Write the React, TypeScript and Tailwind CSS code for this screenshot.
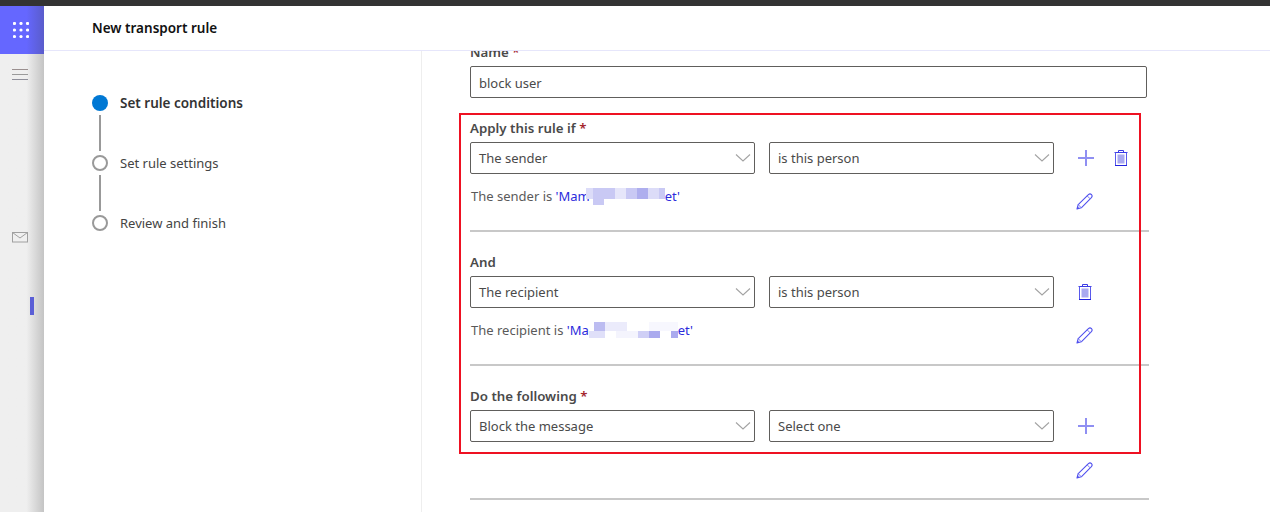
import React from "react";

const font = "[font-family:'Noto_Sans','Open_Sans',sans-serif]";

function Chevron() {
  return (
    <svg width="16" height="10" viewBox="0 0 16 10" fill="none" className="shrink-0">
      <path d="M1 1.5 L8 8 L15 1.5" stroke="#a3a3a3" strokeWidth="1.1" />
    </svg>
  );
}

function Plus() {
  return (
    <svg width="16" height="16" viewBox="0 0 16 16" className="block">
      <path d="M0 8 H16" stroke="#8f8ff2" strokeWidth="2" />
      <path d="M8 0 V16" stroke="#8f8ff2" strokeWidth="2" />
    </svg>
  );
}

function Trash() {
  return (
    <svg width="14" height="16" viewBox="0 0 14 16" fill="none" className="block">
      <rect x="3.5" y="4.5" width="7" height="9" fill="#a9a9f0" />
      <path d="M0.5 2.5 H13.5 M4.5 2.5 V0.5 H9.5 V2.5" stroke="#3a3ae6" strokeWidth="1" />
      <path d="M1.5 2.5 V15.5 H12.5 V2.5" stroke="#5a5aec" strokeWidth="1" />
      <path d="M1 15.5 H13" stroke="#2222dd" strokeWidth="1" />
    </svg>
  );
}

function Pencil() {
  return (
    <svg width="17" height="17" viewBox="0 0 17 17" fill="none" className="block">
      <path
        d="M1 16 L2.2 11.6 L12.4 1.6 C13.4 0.7 14.6 0.7 15.5 1.6 C16.3 2.5 16.3 3.6 15.4 4.6 L5.3 14.8 Z"
        stroke="#4f4fee"
        strokeWidth="1.1"
        strokeLinejoin="round"
      />
      <path d="M2.2 11.6 L5.3 14.8 M11.2 2.9 L14.2 5.9" stroke="#7a7af2" strokeWidth="1" />
      <path d="M1 16 L1.6 13.6 L3.4 15.3 Z" fill="#4f4fee" />
    </svg>
  );
}

function Select({ value }: { value: string }) {
  return (
    <div className="flex h-8 w-[285px] items-center justify-between rounded-[2px] border border-[#605e5c] bg-white pl-2 pr-[3px] text-[#4a4a4a]">
      <span className="pt-0.5">{value}</span>
      <Chevron />
    </div>
  );
}

function Mosaic({ w, h, cells, className }: { w: number; h: number; cells: [number, number, number, number, string][]; className?: string }) {
  return (
    <svg width={w} height={h} viewBox={`0 0 ${w} ${h}`} className={`inline-block align-top ${className ?? ""}`}>
      {cells.map(([x, y, cw, ch, c], i) => (
        <rect key={i} x={x} y={y} width={cw} height={ch} fill={c} />
      ))}
    </svg>
  );
}

const senderCells: [number, number, number, number, string][] = [
  [0, 2, 7, 11, "#dcdcf8"],
  [7, 2, 11, 11, "#c9c9f4"],
  [7, 13, 11, 6, "#c9c9f4"],
  [18, 2, 11, 11, "#c9c9f4"],
  [29, 2, 11, 11, "#e6e6fa"],
  [40, 2, 11, 11, "#c9c9f4"],
  [51, 2, 11, 11, "#aeaeee"],
  [62, 2, 11, 11, "#dcdcf8"],
  [73, 2, 6, 11, "#c9c9f4"],
];

const recipientCells: [number, number, number, number, string][] = [
  [0, 11, 16, 7, "#e0e0f9"],
  [5, 2, 11, 9, "#bcbcf1"],
  [16, 2, 22, 9, "#ebebfb"],
  [27, 11, 22, 7, "#f4f4fd"],
  [49, 11, 11, 7, "#cfcff6"],
  [60, 11, 11, 7, "#aaaaee"],
  [60, 2, 29, 9, "#f7f7fe"],
  [82, 11, 7, 7, "#aaaaee"],
];

function Section({
  label,
  required,
  left,
  right,
  actions,
  desc,
  last,
}: {
  label: string;
  required?: boolean;
  left: string;
  right: string;
  actions: React.ReactNode;
  desc?: React.ReactNode;
  last?: boolean;
}) {
  return (
    <section className="h-[134px] w-[679px] border-b-2 border-[#c8c8c8] pt-5">
      <div className="h-5 text-[13.3px] font-semibold leading-5 text-[#4a4a4a]">
        {label}
        {required && <span className="text-[#a4262c]"> *</span>}
      </div>
      <div className="mt-1 flex items-center gap-[14px]">
        <Select value={left} />
        <Select value={right} />
        <div className="ml-[10px] flex items-center gap-5">{actions}</div>
      </div>
      <div className="mt-3 flex h-[38px] items-start justify-between">
        <div className="h-5 whitespace-nowrap pl-px leading-5 text-[#5a5a5a]">{desc}</div>
        <div className={`mr-[56px] ${last ? "mt-2" : "mt-[7px]"}`}>
          <Pencil />
        </div>
      </div>
    </section>
  );
}

export default function App() {
  return (
    <div className={`flex h-[512px] w-[1270px] flex-col overflow-hidden bg-white text-[13px] ${font}`}>
      <div className="h-[6px] shrink-0 bg-[#333333]" />
      <div className="flex min-h-0 flex-1">
        <aside className="z-10 flex w-11 shrink-0 flex-col bg-gradient-to-r from-[#efefef] from-60% to-[#c4c4c4]">
          <div className="flex h-12 items-center justify-center bg-gradient-to-r from-[#6567ff] from-60% to-[#5a5ccb]">
            <svg width="16" height="16" viewBox="0 0 16 16" className="-ml-[3px]">
              {[1.5, 8, 14.5].flatMap((y) =>
                [1.5, 8, 14.5].map((x) => <circle key={`${x}-${y}`} cx={x} cy={y} r="1.6" fill="#fff" />),
              )}
            </svg>
          </div>
          <div className="ml-3 mt-[15px] flex w-4 flex-col gap-1">
            <div className="h-px bg-[#9a8f8f]" />
            <div className="h-px bg-[#9a9a9a]" />
            <div className="h-px bg-[#8f8f9a]" />
          </div>
          <svg width="17" height="11" viewBox="0 0 17 11" fill="none" className="ml-3 mt-[152px]">
            <rect x="0.5" y="0.5" width="15" height="9.5" fill="#f0f0f0" stroke="#a0a0a0" />
            <path d="M0.5 0.5 L8 6 L15.5 0.5" stroke="#a0a0a0" />
          </svg>
          <div className="ml-[30px] mt-[54px] h-[18px] w-1 bg-[#5b5fd6]" />
        </aside>

        <div className="flex min-w-0 flex-1 flex-col">
          <header className="flex h-[45px] shrink-0 items-center border-b border-[#e6e6fb] pl-[48px] text-[13.5px] font-semibold text-[#111111]">
            New transport rule
          </header>
          <div className="flex min-h-0 flex-1">
            <nav className="w-[378px] shrink-0 border-r border-[#eeeeee] pl-[48px] pt-[44px]">
              <div className="flex items-center gap-3 text-[13.5px] font-semibold text-[#333333]">
                <span className="h-4 w-4 rounded-full bg-[#0078d4]" />
                <span className="leading-4">Set rule conditions</span>
              </div>
              <div className="ml-[7px] mt-1 h-9 w-0.5 bg-[#999999]" />
              <div className="mt-1 flex items-center gap-3 text-[#444444]">
                <span className="h-4 w-4 rounded-full border-2 border-[#999999]" />
                <span className="leading-4">Set rule settings</span>
              </div>
              <div className="ml-[7px] mt-1 h-9 w-0.5 bg-[#999999]" />
              <div className="mt-1 flex items-center gap-3 text-[#444444]">
                <span className="h-4 w-4 rounded-full border-2 border-[#999999]" />
                <span className="leading-4">Review and finish</span>
              </div>
            </nav>

            <main className="relative min-w-0 flex-1 overflow-hidden pl-[48px]">
              <div className="-mt-[9px] h-5 text-[13.3px] font-semibold leading-5 text-[#4a4a4a]">
                Name <span className="text-[#a4262c]">*</span>
              </div>
              <div className="mt-[4px] flex h-8 w-[677px] items-center rounded-[2px] border border-[#605e5c] pl-2 pt-1 text-[#4a4a4a]">
                block user
              </div>
              <Section
                label="Apply this rule if"
                required
                left="The sender"
                right="is this person"
                actions={
                  <>
                    <Plus />
                    <Trash />
                  </>
                }
                desc={
                  <>
                    The sender is <span className="text-[#2b2bdc]">'Mam</span>
                    <Mosaic w={79} h={19} cells={senderCells} className="-ml-1" />
                    <span className="text-[#2b2bdc]">et'</span>
                  </>
                }
              />
              <Section
                label="And"
                left="The recipient"
                right="is this person"
                actions={<Trash />}
                desc={
                  <>
                    The recipient is <span className="text-[#2b2bdc]">'Ma</span>
                    <Mosaic w={89} h={18} cells={recipientCells} />
                    <span className="text-[#2b2bdc]">et'</span>
                  </>
                }
              />
              <Section
                label="Do the following"
                required
                left="Block the message"
                right="Select one"
                actions={<Plus />}
                last
              />
              <div className="pointer-events-none absolute left-[37px] top-[62px] h-[341px] w-[682px] border-2 border-[#ee1122]" />
            </main>
          </div>
        </div>
      </div>
    </div>
  );
}
